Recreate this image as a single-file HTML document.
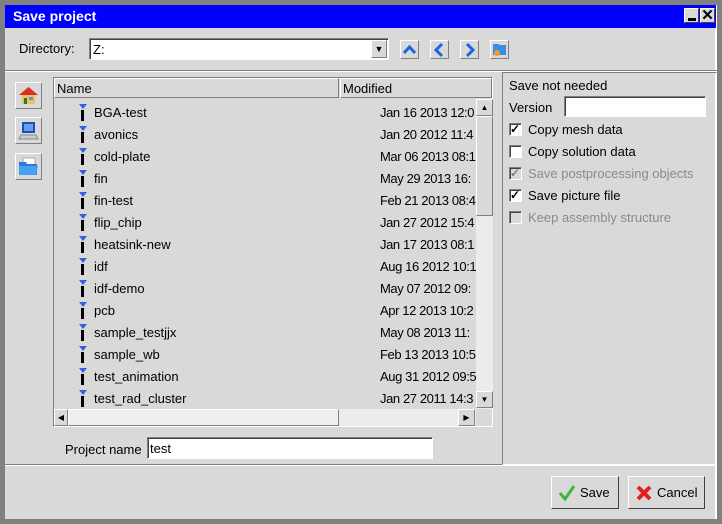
<!DOCTYPE html>
<html><head><style>
*{box-sizing:border-box;margin:0;padding:0}
body{width:722px;height:524px;background:#808080;font-family:"Liberation Sans",sans-serif;font-size:13px;color:#000;position:relative;overflow:hidden}
.a{position:absolute}
.win{left:5px;top:5px;width:712px;height:514px;background:#d9d9d9;border-right:2px solid #fff;border-bottom:0}
.title{left:0;top:0;width:711px;height:23px;background:#0000ff;color:#fff;font-weight:bold;font-size:14px;padding:3px 0 0 8px}
.sunk{border:1px solid;border-color:#808080 #fff #fff #808080}
.rais{border:1px solid;border-color:#fff #808080 #808080 #fff}
.tb{width:19px;height:19px;background:#d9d9d9}
.row{position:absolute;left:0;height:22px;width:420px}
.row .n{position:absolute;left:40px;top:4px}
.row .d{position:absolute;left:326px;top:4px;width:96px;overflow:hidden;white-space:nowrap;letter-spacing:-0.4px}
.ic{position:absolute;left:24px;top:1px;width:10px;height:20px}
.cb{position:absolute;width:13px;height:13px;background:#fff;border:1px solid;border-color:#808080 #fff #fff #808080;box-shadow:inset 1px 1px 0 #404040}
.lbl{position:absolute}
.gr{color:#8a8a8a}
</style></head><body>
<div class="a win">
<div class="a title">Save project</div>
<div class="a" style="left:679px;top:3px;width:15px;height:15px;background:#d9d9d9;border:1px solid #fff;border-right-color:#404040;border-bottom-color:#404040"><div class="a" style="left:3px;top:9px;width:8px;height:3px;background:#000"></div></div>
<div class="a" style="left:695px;top:3px;width:15px;height:15px;background:#d9d9d9;border:1px solid #fff;border-right-color:#404040;border-bottom-color:#404040;font-weight:bold;font-size:15px;line-height:13px;text-align:center">✕</div>

<div class="a" style="left:14px;top:36px">Directory:</div>
<div class="a sunk" style="left:84px;top:33px;width:300px;height:22px;background:#fff;box-shadow:inset 1px 1px 0 #404040;padding:3px 0 0 3px">Z:</div>
<div class="a rais" style="left:366px;top:35px;width:16px;height:18px;background:#d9d9d9;font-size:9px;text-align:center;line-height:16px">▼</div>
<div class="a rais tb" style="left:395px;top:35px"><svg width="17" height="17"><path d="M3 12l5.5-6 5.5 6" stroke="#1a66e0" stroke-width="3" fill="none"/></svg></div>
<div class="a rais tb" style="left:425px;top:35px"><svg width="17" height="17"><path d="M11 3L5 9l6 6" stroke="#1a66e0" stroke-width="3" fill="none"/></svg></div>
<div class="a rais tb" style="left:455px;top:35px"><svg width="17" height="17"><path d="M6 3l6 6-6 6" stroke="#1a66e0" stroke-width="3" fill="none"/></svg></div>
<div class="a rais tb" style="left:485px;top:35px"><svg width="17" height="17"><rect x="2" y="4" width="13" height="10" fill="#3a8ee8"/><rect x="2" y="3" width="6" height="3" fill="#3a8ee8"/><circle cx="6" cy="12" r="3" fill="#f0a020"/></svg></div>

<div class="a" style="left:0;top:65px;width:712px;height:1px;background:#808080"></div>
<div class="a" style="left:0;top:66px;width:712px;height:1px;background:#fff"></div>
<div class="a" style="left:497px;top:67px;width:1px;height:393px;background:#808080"></div>
<div class="a" style="left:0;top:459px;width:712px;height:1px;background:#808080"></div>
<div class="a" style="left:0;top:460px;width:712px;height:1px;background:#fff"></div>

<div class="a rais" style="left:10px;top:77px;width:27px;height:27px;background:#d9d9d9"><svg width="25" height="25"><path d="M3 12L12.5 4 22 12z" fill="#d83020"/><rect x="6" y="12" width="13" height="9" fill="#f0c060"/><rect x="8" y="15" width="3" height="6" fill="#208030"/><rect x="13" y="14" width="4" height="3" fill="#6090d0"/></svg></div>
<div class="a rais" style="left:10px;top:112px;width:27px;height:27px;background:#d9d9d9"><svg width="25" height="25"><rect x="6" y="4" width="13" height="11" fill="#2050b0"/><rect x="8" y="6" width="9" height="7" fill="#60a0f0"/><path d="M5 17h15l2 4H3z" fill="#ccc" stroke="#888"/></svg></div>
<div class="a rais" style="left:10px;top:148px;width:27px;height:27px;background:#d9d9d9"><svg width="25" height="25"><rect x="7" y="4" width="12" height="12" fill="#fff" stroke="#aaa"/><path d="M3 8h7l1 2h10v11H3z" fill="#2a7ae0"/><path d="M3 12h19l-2 9H3z" fill="#4aa0f0"/></svg></div>

<div class="a sunk" style="left:48px;top:72px;width:440px;height:350px"></div>
<div class="a rais" style="left:49px;top:73px;width:285px;height:20px;background:#d9d9d9;padding:2px 2px">Name</div>
<div class="a rais" style="left:335px;top:73px;width:152px;height:20px;background:#d9d9d9;padding:2px 2px">Modified</div>

<div class="a" style="left:49px;top:94px;width:422px;height:310px;overflow:hidden">
<div class="row" style="top:2px"><i class="ic"><svg width="10" height="20"><path d="M1 2h8L5 7z" fill="#3060e0"/><rect x="3" y="8" width="3" height="11" fill="#000"/></svg></i><span class="n">BGA-test</span><span class="d">Jan 16 2013 12:0</span></div>
<div class="row" style="top:24px"><i class="ic"><svg width="10" height="20"><path d="M1 2h8L5 7z" fill="#3060e0"/><rect x="3" y="8" width="3" height="11" fill="#000"/></svg></i><span class="n">avonics</span><span class="d">Jan 20 2012 11:4</span></div>
<div class="row" style="top:46px"><i class="ic"><svg width="10" height="20"><path d="M1 2h8L5 7z" fill="#3060e0"/><rect x="3" y="8" width="3" height="11" fill="#000"/></svg></i><span class="n">cold-plate</span><span class="d">Mar 06 2013 08:1</span></div>
<div class="row" style="top:68px"><i class="ic"><svg width="10" height="20"><path d="M1 2h8L5 7z" fill="#3060e0"/><rect x="3" y="8" width="3" height="11" fill="#000"/></svg></i><span class="n">fin</span><span class="d">May 29 2013 16:</span></div>
<div class="row" style="top:90px"><i class="ic"><svg width="10" height="20"><path d="M1 2h8L5 7z" fill="#3060e0"/><rect x="3" y="8" width="3" height="11" fill="#000"/></svg></i><span class="n">fin-test</span><span class="d">Feb 21 2013 08:4</span></div>
<div class="row" style="top:112px"><i class="ic"><svg width="10" height="20"><path d="M1 2h8L5 7z" fill="#3060e0"/><rect x="3" y="8" width="3" height="11" fill="#000"/></svg></i><span class="n">flip_chip</span><span class="d">Jan 27 2012 15:4</span></div>
<div class="row" style="top:134px"><i class="ic"><svg width="10" height="20"><path d="M1 2h8L5 7z" fill="#3060e0"/><rect x="3" y="8" width="3" height="11" fill="#000"/></svg></i><span class="n">heatsink-new</span><span class="d">Jan 17 2013 08:1</span></div>
<div class="row" style="top:156px"><i class="ic"><svg width="10" height="20"><path d="M1 2h8L5 7z" fill="#3060e0"/><rect x="3" y="8" width="3" height="11" fill="#000"/></svg></i><span class="n">idf</span><span class="d">Aug 16 2012 10:1</span></div>
<div class="row" style="top:178px"><i class="ic"><svg width="10" height="20"><path d="M1 2h8L5 7z" fill="#3060e0"/><rect x="3" y="8" width="3" height="11" fill="#000"/></svg></i><span class="n">idf-demo</span><span class="d">May 07 2012 09:</span></div>
<div class="row" style="top:200px"><i class="ic"><svg width="10" height="20"><path d="M1 2h8L5 7z" fill="#3060e0"/><rect x="3" y="8" width="3" height="11" fill="#000"/></svg></i><span class="n">pcb</span><span class="d">Apr 12 2013 10:2</span></div>
<div class="row" style="top:222px"><i class="ic"><svg width="10" height="20"><path d="M1 2h8L5 7z" fill="#3060e0"/><rect x="3" y="8" width="3" height="11" fill="#000"/></svg></i><span class="n">sample_testjjx</span><span class="d">May 08 2013 11:</span></div>
<div class="row" style="top:244px"><i class="ic"><svg width="10" height="20"><path d="M1 2h8L5 7z" fill="#3060e0"/><rect x="3" y="8" width="3" height="11" fill="#000"/></svg></i><span class="n">sample_wb</span><span class="d">Feb 13 2013 10:5</span></div>
<div class="row" style="top:266px"><i class="ic"><svg width="10" height="20"><path d="M1 2h8L5 7z" fill="#3060e0"/><rect x="3" y="8" width="3" height="11" fill="#000"/></svg></i><span class="n">test_animation</span><span class="d">Aug 31 2012 09:5</span></div>
<div class="row" style="top:288px"><i class="ic"><svg width="10" height="20"><path d="M1 2h8L5 7z" fill="#3060e0"/><rect x="3" y="8" width="3" height="11" fill="#000"/></svg></i><span class="n">test_rad_cluster</span><span class="d">Jan 27 2011 14:3</span></div>
</div>

<div class="a" style="left:471px;top:94px;width:17px;height:310px;background:#ececec"></div>
<div class="a rais" style="left:471px;top:94px;width:17px;height:17px;background:#d9d9d9;font-size:8px;text-align:center;line-height:15px">▲</div>
<div class="a rais" style="left:471px;top:111px;width:17px;height:100px;background:#d9d9d9"></div>
<div class="a rais" style="left:471px;top:386px;width:17px;height:17px;background:#d9d9d9;font-size:8px;text-align:center;line-height:15px">▼</div>
<div class="a" style="left:49px;top:404px;width:422px;height:17px;background:#ececec"></div>
<div class="a rais" style="left:49px;top:404px;width:14px;height:17px;background:#d9d9d9;font-size:8px;text-align:center;line-height:15px">◀</div>
<div class="a rais" style="left:63px;top:404px;width:271px;height:17px;background:#efefef"></div>
<div class="a rais" style="left:453px;top:404px;width:17px;height:17px;background:#d9d9d9;font-size:8px;text-align:center;line-height:15px">▶</div>

<div class="a" style="left:60px;top:437px">Project name</div>
<div class="a sunk" style="left:142px;top:432px;width:286px;height:22px;background:#fff;box-shadow:inset 1px 1px 0 #404040;padding:3px 0 0 2px">test</div>

<div class="a sunk" style="left:497px;top:67px;width:215px;height:393px"></div>
<div class="a" style="left:504px;top:73px">Save not needed</div>
<div class="a" style="left:504px;top:95px">Version</div>
<div class="a sunk" style="left:559px;top:91px;width:142px;height:21px;background:#fff;box-shadow:inset 1px 1px 0 #404040"></div>
<div class="cb" style="left:504px;top:118px;font-size:12px;line-height:11px;font-weight:bold">✓</div><div class="lbl" style="left:523px;top:117px">Copy mesh data</div>
<div class="cb" style="left:504px;top:140px"></div><div class="lbl" style="left:523px;top:139px">Copy solution data</div>
<div class="cb" style="left:504px;top:162px;background:#d9d9d9;color:#808080;font-size:12px;line-height:11px;font-weight:bold">✓</div><div class="lbl gr" style="left:523px;top:161px">Save postprocessing objects</div>
<div class="cb" style="left:504px;top:184px;font-size:12px;line-height:11px;font-weight:bold">✓</div><div class="lbl" style="left:523px;top:183px">Save picture file</div>
<div class="cb" style="left:504px;top:206px;background:#d9d9d9"></div><div class="lbl gr" style="left:523px;top:205px">Keep assembly structure</div>

<div class="a" style="left:546px;top:471px;width:68px;height:33px;background:#d9d9d9;border:1px solid;border-color:#fff #404040 #404040 #fff"><svg class="a" style="left:6px;top:7px" width="18" height="18"><path d="M2 9l5 6L16 2" stroke="#3cb83c" stroke-width="3" fill="none"/></svg><span class="a" style="left:28px;top:8px">Save</span></div>
<div class="a" style="left:623px;top:471px;width:77px;height:33px;background:#d9d9d9;border:1px solid;border-color:#fff #404040 #404040 #fff"><svg class="a" style="left:6px;top:7px" width="18" height="18"><path d="M3 3l12 12M15 3L3 15" stroke="#e02020" stroke-width="4"/></svg><span class="a" style="left:28px;top:8px">Cancel</span></div>
</div>
</body></html>
